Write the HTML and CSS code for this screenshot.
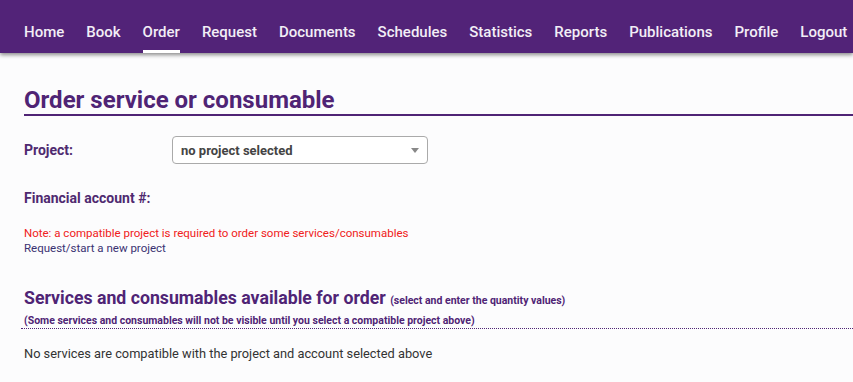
FILE: index.html
```html
<!DOCTYPE html>
<html>
<head>
<meta charset="utf-8">
<link rel="stylesheet" href="styles.css">
</head>
<body>
<nav class="nav">
  <a class="nav-item">Home</a>
  <a class="nav-item">Book</a>
  <a class="nav-item active">Order</a>
  <a class="nav-item">Request</a>
  <a class="nav-item">Documents</a>
  <a class="nav-item">Schedules</a>
  <a class="nav-item">Statistics</a>
  <a class="nav-item">Reports</a>
  <a class="nav-item">Publications</a>
  <a class="nav-item">Profile</a>
  <a class="nav-item">Logout</a>
</nav>
<main class="content">
  <h1 class="title">Order service or consumable</h1>
  <div class="field-row">
    <label class="field-label">Project:</label>
    <div class="select">
      <span class="select-text">no project selected</span>
      <span class="select-arrow"></span>
    </div>
  </div>
  <div class="field-row account">
    <label class="field-label">Financial account #:</label>
  </div>
  <p class="note">Note: a compatible project is required to order some services/consumables</p>
  <a class="link">Request/start a new project</a>
  <h2 class="section-title">Services and consumables available for order <small class="hint">(select and enter the quantity values)</small></h2>
  <div class="sub-hint">(Some services and consumables will not be visible until you select a compatible project above)</div>
  <p class="empty">No services are compatible with the project and account selected above</p>
</main>
</body>
</html>
```
FILE: styles.css
```css
* { box-sizing: border-box; }
html, body { margin: 0; padding: 0; }
body {
  background: #fcfcfd;
  font-family: Roboto, "Liberation Sans", sans-serif;
  color: #333;
  width: 853px;
  height: 382px;
  overflow: hidden;
}
.nav {
  display: flex;
  height: 53px;
  background: #522378;
  padding-left: 13px;
  padding-top: 12px;
  box-shadow: 0 2px 4px rgba(0,0,0,0.45);
  position: relative;
  white-space: nowrap;
}
.nav-item {
  color: #f2eef6;
  font-size: 15px;
  font-weight: 500;
  padding: 0 11px;
  line-height: 40px;
  height: 41px;
  position: relative;
}
.nav-item.active::after {
  content: "";
  position: absolute;
  left: 11px;
  right: 11px;
  bottom: 0;
  height: 3px;
  background: #fff;
}
.content {
  padding: 0 0 0 24px;
}
.title {
  margin: 33px 0 0 0;
  font-size: 24px;
  font-weight: 700;
  color: #4f2475;
  line-height: 28px;
  padding-bottom: 0;
  border-bottom: 2px solid #4f2475;
}
.field-row {
  display: flex;
  align-items: center;
  margin-top: 20px;
}
.field-label {
  width: 148px;
  font-size: 14px;
  font-weight: 700;
  color: #4f2a70;
}
.select {
  width: 256px;
  height: 28px;
  border: 1px solid #aaa;
  border-radius: 4px;
  background: #fff;
  display: flex;
  align-items: center;
  justify-content: space-between;
  padding: 0 8px 0 8px;
}
.select-text {
  font-size: 13px;
  font-weight: 700;
  color: #444;
}
.select-arrow {
  width: 0; height: 0;
  border-left: 4px solid transparent;
  border-right: 4px solid transparent;
  border-top: 5px solid #888;
}
.account { margin-top: 26px; }
.note {
  margin: 20px 0 0 0;
  font-size: 11.5px;
  color: #f02020;
  line-height: 15px;
}
.link {
  display: block;
  font-size: 11.5px;
  color: #3a3272;
  line-height: 15px;
}
.section-title {
  margin: 31px 0 0 0;
  font-size: 17.7px;
  font-weight: 700;
  color: #4f2475;
  line-height: 22px;
}
.hint {
  font-size: 10.5px;
  font-weight: 700;
}
.sub-hint {
  font-size: 10.5px;
  font-weight: 700;
  color: #4f2475;
  margin-top: 2px;
  padding-bottom: 1px;
  border-bottom: 1px dotted #4f2475;
  margin-left: -3px;
  padding-left: 3px;
}
.empty {
  margin: 17px 0 0 0;
  font-size: 12.8px;
  color: #333;
}
```
